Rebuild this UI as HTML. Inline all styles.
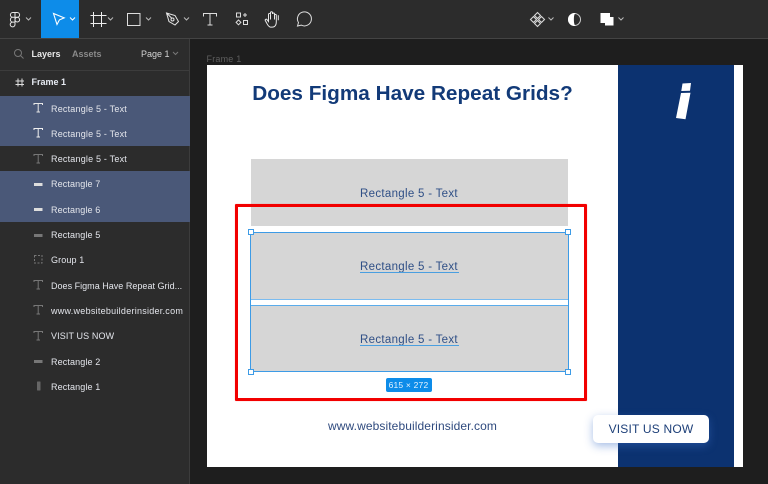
<!DOCTYPE html>
<html><head><meta charset="utf-8">
<style>
*{box-sizing:border-box}
html,body{margin:0;padding:0;width:768px;height:484px;overflow:hidden;background:#1e1e1e;font-family:"Liberation Sans",sans-serif}
.a{position:absolute}
.row{position:absolute;left:0;width:190px;height:25.3px;color:#e4e6ec;font-size:9px;line-height:26px;padding-left:51px;white-space:nowrap;letter-spacing:.12px}
.row svg{position:absolute;left:32.500px;top:6.500px}
.sel{background:#4a5878}
svg{position:absolute;overflow:visible}
.t{position:absolute;color:#2f4f86;font-size:11.5px;text-align:center;white-space:nowrap;letter-spacing:.3px}
</style></head><body>
<!-- toolbar -->
<div class="a" style="left:0;top:0;width:768px;height:39px;background:#2c2c2c;border-bottom:1px solid #444"></div>
<div class="a" style="left:41px;top:0;width:38px;height:38px;background:#0d8ce9"></div>
<svg width="768" height="38" style="left:0;top:0" fill="none" stroke="#e6e6e6" stroke-width="1">
<path d="M15 12.500h-2.200a2.400 2.400 0 0 0 0 4.800h2.200zM15 12.500h2.200a2.400 2.400 0 0 1 0 4.800h-2.200zM15 17.300h-2.200a2.400 2.400 0 0 0 0 4.800h2.200zM15 22.100v2.200a2.400 2.400 0 1 1-2.200-2.200zM19.600 19.700a2.300 2.300 0 1 1-4.600 0 2.300 2.300 0 0 1 4.600 0z"/>
<path d="M26 17.500l2.500 2.500 2.500-2.500" stroke="#b8b8b8"/>
<path d="M53.500 13.500l3.500 11 2.400-4.600 4.800-2z" stroke="#fff" stroke-width="1.100"/>
<path d="M70 17.500l2.500 2.500 2.500-2.500" stroke="#fff"/>
<path d="M93.500 12v15M101.500 12v15M90.500 15.500h16M90.500 23.500h16" stroke="#eee"/>
<path d="M108 17.500l2.500 2.500 2.500-2.500" stroke="#b8b8b8"/>
<rect x="127.500" y="13.500" width="12.500" height="12" stroke="#ddd"/>
<path d="M146 17.500l2.500 2.500 2.500-2.500" stroke="#b8b8b8"/>
<path d="M166.500 13l8.500 2.500 3.500 6-3.500 3.500-6-3.500zM166.500 13l5.500 5.500" stroke="#e6e6e6"/>
<circle cx="172.500" cy="19.500" r="1.500"/>
<path d="M184 17.500l2.500 2.500 2.500-2.500" stroke="#b8b8b8"/>
<path d="M203.500 16.500v-3h13v3M210 13.500v11.500M207.500 25h5" stroke="#ddd"/>
<rect x="236.500" y="13" width="4" height="4" stroke="#ddd"/><path d="M245 13v4M243 15h4" stroke="#ddd"/>
<path d="M238.500 20l2.400 2.400-2.400 2.400-2.400-2.400z" stroke="#ddd"/><rect x="243.500" y="20.500" width="4" height="4" stroke="#ddd"/>
<path d="M270 27c-2-.8-2.500-2.500-3.500-4.300l-1.200-2.200c-.5-1.200 1-1.800 1.800-.8l1.400 1.800V14.500c0-1.400 2-1.400 2-.1V12.800c0-1.400 2-1.400 2 0V14c0-1.300 2-1.300 2 0v1.300c0-1.300 1.800-1.300 1.800 0V22c0 3-1.200 4.500-3 5-1.600.2-2.300.3-3.300 0zM270.500 14.500v5M274.500 14v5.500M278.300 15.300v5" stroke="#eaeaea"/>
<path d="M297.500 26l1-3.400a7 7 0 1 1 2.700 2.500z" stroke="#ddd"/>
<g stroke="#d8d8d8" stroke-width="1.100"><path d="M537.500 12.500l3 3-3 3-3-3zM537.500 20.500l3 3-3 3-3-3zM533.500 16.500l3 3-3 3-3-3zM541.500 16.500l3 3-3 3-3-3z"/></g>
<path d="M548.500 17.500l2.500 2.500 2.500-2.500M618.500 17.500l2.500 2.500 2.500-2.500" stroke="#b8b8b8"/>
<circle cx="574.500" cy="19.500" r="6" stroke="#ccc"/><path d="M574.500 13.500a6 6 0 0 0 0 12c-1.500-2-1.500-10 0-12z" fill="#fff" stroke="#fff"/>
<rect x="600.500" y="13" width="9.500" height="10" fill="#fff" stroke="none"/><rect x="605" y="17" width="8.500" height="8.500" fill="#fff" stroke="none"/>
</svg>
<!-- sidebar -->
<div class="a" style="left:0;top:39px;width:190px;height:445px;background:#2c2c2c;border-right:1px solid #3c3c3c"></div>
<div class="a" style="left:0;top:69.500px;width:190px;height:1px;background:#3c3c3c"></div>
<svg width="12" height="12" style="left:13px;top:48px" fill="none" stroke="#777" stroke-width="1"><circle cx="5" cy="5" r="3.500"/><path d="M7.500 7.500l3 3"/></svg>
<div class="a" style="left:31.500px;top:48px;font-size:9px;font-weight:bold;color:#e8e8e8;line-height:12px">Layers</div>
<div class="a" style="left:72px;top:48px;font-size:9px;font-weight:bold;color:#8a8a8a;line-height:12px">Assets</div>
<div class="a" style="left:141px;top:48px;font-size:9px;color:#d4d4d4;line-height:12px">Page 1</div>
<svg width="8" height="6" style="left:171.500px;top:51px" fill="none" stroke="#777"><path d="M1 1l2.500 2.500L6 1"/></svg>
<svg width="10" height="10" style="left:14.500px;top:78px" fill="none" stroke="#ddd" stroke-width="1"><path d="M3 .5v8M7 .5v8M.5 3h8.500M.5 6.500h8.500"/></svg>
<div class="a" style="left:31.500px;top:76px;font-size:9px;font-weight:bold;color:#e8ecf4;line-height:13px">Frame 1</div>
<div class="a sel" style="left:0;top:95.500px;width:190px;height:50.500px"></div>
<div class="a sel" style="left:0;top:171px;width:190px;height:51px"></div>
<div class="row" style="top:95.500px;letter-spacing:.2px"><svg width="12" height="12" fill="none" stroke="#e6e6e6"><path d="M1 3V1.500h8.500V3M5.200 1.500V10M3.500 10h3.500"/></svg>Rectangle 5 - Text</div>
<div class="row" style="top:120.800px;letter-spacing:.2px"><svg width="12" height="12" fill="none" stroke="#f0f0f0"><path d="M1 3V1.500h8.500V3M5.200 1.500V10M3.500 10h3.500"/></svg>Rectangle 5 - Text</div>
<div class="row" style="top:146.100px;letter-spacing:.2px"><svg width="12" height="12" fill="none" stroke="#777"><path d="M1 3V1.500h8.500V3M5.200 1.500V10M3.500 10h3.500"/></svg>Rectangle 5 - Text</div>
<div class="row" style="top:171.400px"><svg width="12" height="12"><rect x="1" y="5" width="8.500" height="3" fill="#ddd"/></svg>Rectangle 7</div>
<div class="row" style="top:196.700px"><svg width="12" height="12"><rect x="1" y="5" width="8.500" height="3" fill="#ddd"/></svg>Rectangle 6</div>
<div class="row" style="top:222px"><svg width="12" height="12"><rect x="1" y="5" width="8.500" height="3" fill="#777"/></svg>Rectangle 5</div>
<div class="row" style="top:247.300px"><svg width="12" height="12" fill="none" stroke="#777" stroke-dasharray="2 1.500"><rect x="1.500" y="1.500" width="7.500" height="7.500"/></svg>Group 1</div>
<div class="row" style="top:272.600px;letter-spacing:.02px"><svg width="12" height="12" fill="none" stroke="#777"><path d="M1 3V1.500h8.500V3M5.200 1.500V10M3.500 10h3.500"/></svg>Does Figma Have Repeat Grid...</div>
<div class="row" style="top:297.900px;letter-spacing:.26px"><svg width="12" height="12" fill="none" stroke="#777"><path d="M1 3V1.500h8.500V3M5.200 1.500V10M3.500 10h3.500"/></svg>www.websitebuilderinsider.com</div>
<div class="row" style="top:323.200px"><svg width="12" height="12" fill="none" stroke="#777"><path d="M1 3V1.500h8.500V3M5.200 1.500V10M3.500 10h3.500"/></svg>VISIT US NOW</div>
<div class="row" style="top:348.500px"><svg width="12" height="12"><rect x="1" y="5" width="8.500" height="3" fill="#777"/></svg>Rectangle 2</div>
<div class="row" style="top:373.800px"><svg width="12" height="12"><rect x="4" y="1.500" width="3.500" height="9" rx=".5" fill="#666"/></svg>Rectangle 1</div>
<!-- canvas -->
<div class="a" style="left:206.500px;top:53px;font-size:9px;color:#5e5e5e;line-height:12px;letter-spacing:.2px">Frame 1</div>
<div class="a" style="left:207px;top:65px;width:536px;height:402px;background:#fff"></div>
<div class="a" style="left:618px;top:65px;width:116px;height:402px;background:#0c3270"></div>
<div class="a" style="left:207px;top:80px;width:411px;text-align:center;font-size:20.750px;font-weight:bold;color:#123a78;line-height:28px">Does Figma Have Repeat Grids?</div>
<svg width="768" height="484" style="left:0;top:0" fill="#fff"><path d="M682.500 83.500l8.500-.5-1 7.700-8.700.3zM681 93l9.500-.3-5 26.500-9.500-1.200z"/></svg>
<div class="a" style="left:251px;top:159px;width:317px;height:67px;background:#d6d6d6"></div>
<div class="a" style="left:251px;top:232px;width:317px;height:67px;background:#d6d6d6"></div>
<div class="a" style="left:251px;top:305px;width:317px;height:67px;background:#d6d6d6"></div>
<div class="t" style="left:251px;top:187px;width:316px;line-height:14px">Rectangle 5 - Text</div>
<div class="t" style="left:251px;top:260px;width:316px;line-height:14px">Rectangle 5 - Text</div>
<div class="t" style="left:251px;top:333px;width:316px;line-height:14px">Rectangle 5 - Text</div>
<div class="a" style="left:360px;top:272px;width:99px;height:1px;background:#4a9fe0"></div>
<div class="a" style="left:360px;top:345px;width:99px;height:1px;background:#4a9fe0"></div>
<div class="a" style="left:250px;top:232px;width:319px;height:140px;border:1px solid #3d9be6"></div>
<div class="a" style="left:251px;top:299px;width:317px;height:1px;background:#7bbcf0"></div>
<div class="a" style="left:251px;top:305px;width:317px;height:1px;background:#5aaceb"></div>
<div class="a" style="left:234.500px;top:203.500px;width:352px;height:197px;border:3px solid #f20000;border-radius:1px;box-shadow:0 0 1px rgba(255,0,0,.4)"></div>
<div class="a" style="left:247.500px;top:229px;width:6px;height:6px;background:#fff;border:1px solid #3d9be6"></div>
<div class="a" style="left:564.500px;top:229px;width:6px;height:6px;background:#fff;border:1px solid #3d9be6"></div>
<div class="a" style="left:247.500px;top:369px;width:6px;height:6px;background:#fff;border:1px solid #3d9be6"></div>
<div class="a" style="left:564.500px;top:369px;width:6px;height:6px;background:#fff;border:1px solid #3d9be6"></div>
<div class="a" style="left:385.500px;top:378px;width:46px;height:14px;background:#0d8ce9;border-radius:2px;color:#e6f3fe;font-size:8.500px;line-height:14px;text-align:center;letter-spacing:.2px">615 × 272</div>
<div class="t" style="left:207px;top:419px;width:411px;font-size:12px;line-height:15px;color:#2f4a7e;letter-spacing:.1px">www.websitebuilderinsider.com</div>
<div class="a" style="left:593px;top:415px;width:116px;height:28px;background:#fff;border-radius:5px;box-shadow:0 3px 9px rgba(60,110,200,.45);color:#1d3f78;font-size:12px;line-height:28px;text-align:center;letter-spacing:.2px">VISIT US NOW</div>
</body></html>
